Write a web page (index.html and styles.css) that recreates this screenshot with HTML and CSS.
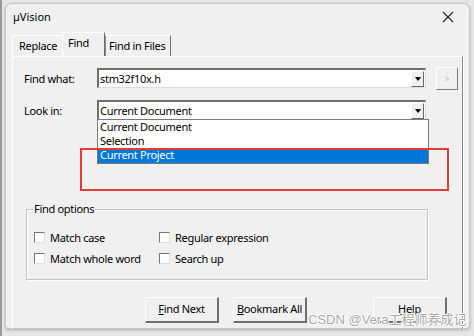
FILE: index.html
```html
<!DOCTYPE html>
<html lang="en">
<head>
    <meta charset="UTF-8">
    <meta name="viewport" content="width=device-width, initial-scale=1.0">
    <title>µVision Find</title>
    <link rel="stylesheet" href="styles.css">
</head>
<body>
    <div class="window">
        <div class="titlebar">
            <span class="title">µVision</span>
            <svg class="close" width="12" height="12" viewBox="0 0 12 12">
                <path d="M1 1 L11 11 M11 1 L1 11" stroke="#222" stroke-width="1.1" fill="none"/>
            </svg>
        </div>

        <ul class="tabs">
            <li class="tab replace">Replace</li>
            <li class="tab active">Find</li>
            <li class="tab files">Find in Files</li>
        </ul>

        <div class="panel">
            <div class="row">
                <label class="label">Find what:</label>
                <div class="combo">
                    <span class="combo-text">stm32f10x.h</span>
                    <span class="drop"><i></i></span>
                </div>
                <button class="more">&gt;</button>
            </div>

            <div class="row look">
                <label class="label">Look in:</label>
                <div class="combo">
                    <span class="combo-text">Current Document</span>
                    <span class="drop"><i></i></span>
                    <ul class="droplist">
                        <li>Current Document</li>
                        <li>Selection</li>
                        <li class="selected">Current Project</li>
                    </ul>
                </div>
            </div>

            <fieldset class="options">
                <legend>Find options</legend>
                <div class="checks">
                    <span class="check"><i></i>Match case</span>
                    <span class="check"><i></i>Regular expression</span>
                    <span class="check"><i></i>Match whole word</span>
                    <span class="check"><i></i>Search up</span>
                </div>
            </fieldset>

            <div class="buttons">
                <button class="btn find-next"><u>F</u>ind Next</button>
                <button class="btn"><u>B</u>ookmark All</button>
                <button class="btn help"><u>H</u>elp</button>
            </div>

            <div class="highlight"></div>
        </div>
    </div>

    <div class="watermark">CSDN @Vera工程师养成记</div>
</body>
</html>
```

FILE: styles.css
```css
* {
    margin: 0;
    padding: 0;
    box-sizing: border-box;
}

body {
    width: 474px;
    height: 336px;
    overflow: hidden;
    background-color: #e6e6e4;
    border-left: 2px solid #9a9a9a;
    font-family: 'Noto Sans', 'Noto Sans CJK SC', sans-serif;
    font-size: 11px;
    letter-spacing: -0.3px;
    line-height: 16px;
    color: #000;
    position: relative;
}

.window {
    margin: 3px 0 0 3px;
    width: 465px;
    height: 326px;
    background-color: #f0f0f0;
    border: 1px solid #c8c8c8;
    border-radius: 7px 7px 4px 4px;
    box-shadow: 0 1px 3px rgba(0, 0, 0, 0.25);
    padding: 0 6px 0 6px;
}

.titlebar {
    height: 27px;
    display: flex;
    align-items: center;
    justify-content: space-between;
    padding: 0 9px 2px 1px;
}

.title {
    letter-spacing: 0;
}

.close {
    display: block;
    margin-top: 1px;
}

.tabs {
    list-style: none;
    display: flex;
    align-items: flex-end;
    height: 25px;
}

.tab {
    height: 21px;
    line-height: 20px;
    white-space: nowrap;
    border-top: 1px solid #ffffff;
    border-left: 1px solid #ffffff;
    border-right: 1px solid #a0a0a0;
}

.tab.replace {
    width: 50px;
    padding-left: 6px;
    border-right: none;
}

.tab.active {
    height: 24px;
    width: 43px;
    padding-left: 5px;
    border-right: 1px solid #6e6e6e;
}

.tab.files {
    width: 66px;
    padding-left: 3px;
    border-left: 1px solid #8a8a8a;
    border-right: 1px solid #6e6e6e;
}

.panel {
    position: relative;
    width: 451px;
    height: 273px;
    border-left: 1px solid #ffffff;
    border-top: 1px solid #ffffff;
    border-right: 1px solid #8a8a8a;
    box-shadow: 1px 0 0 #ffffff;
    padding: 10px 0 0 11px;
}

.row {
    display: flex;
    align-items: center;
    height: 22px;
}

.row.look {
    margin-top: 10px;
}

.label {
    width: 73px;
    padding-top: 2px;
}

.combo {
    position: relative;
    width: 329px;
    height: 20px;
    background-color: #ffffff;
    border-top: 2px solid #6f6f6f;
    border-left: 2px solid #6f6f6f;
    border-right: 1px solid #dcdcdc;
    border-bottom: 1px solid #dcdcdc;
    display: flex;
    align-items: center;
    justify-content: space-between;
}

.combo-text {
    padding-left: 1px;
    line-height: 16px;
}

.drop {
    width: 13px;
    height: 16px;
    margin-right: 1px;
    background-color: #f0f0f0;
    border-top: 1px solid #ffffff;
    border-left: 1px solid #ffffff;
    border-right: 1px solid #6a6a6a;
    border-bottom: 1px solid #6a6a6a;
    display: flex;
    align-items: center;
    justify-content: center;
}

.drop i {
    width: 0;
    height: 0;
    border-left: 3px solid transparent;
    border-right: 3px solid transparent;
    border-top: 4px solid #000;
}

.more {
    margin-left: 10px;
    width: 22px;
    height: 23px;
    background-color: #f0f0f0;
    border-top: 1px solid #ffffff;
    border-left: 1px solid #ffffff;
    border-right: 1px solid #7a7a7a;
    border-bottom: 1px solid #7a7a7a;
    color: #b8b8b8;
    font-family: 'Noto Sans', sans-serif;
    font-size: 9px;
}

.droplist {
    position: absolute;
    top: 17px;
    left: -2px;
    width: 332px;
    list-style: none;
    background-color: #ffffff;
    border: 1px solid #7a7a7a;
    z-index: 2;
}

.droplist li {
    height: 14px;
    line-height: 14px;
    padding-left: 2px;
}

.droplist li.selected {
    background-color: #0078d7;
    color: #ffffff;
    height: 15px;
}

.highlight {
    position: absolute;
    left: 67px;
    top: 91px;
    width: 369px;
    height: 43px;
    border: 2px solid #e53a3a;
    z-index: 3;
}

.options {
    margin: 80px 0 0 2px;
    width: 402px;
    height: 79px;
    border: 1px solid #c4c4c4;
    box-shadow: inset 1px 1px 0 #ffffff, 1px 1px 0 #ffffff;
    padding: 0 0 0 7px;
}

.options legend {
    padding: 0 1px;
    margin-left: -1px;
}

.checks {
    display: grid;
    grid-template-columns: 125px auto;
    row-gap: 8px;
    margin-top: 14px;
}

.check {
    display: flex;
    align-items: center;
    height: 13px;
    white-space: nowrap;
}

.check i {
    width: 11px;
    height: 11px;
    margin-right: 5px;
    background-color: #ffffff;
    border-top: 1px solid #777;
    border-left: 1px solid #777;
    border-right: 1px solid #e0e0e0;
    border-bottom: 1px solid #e0e0e0;
}

.buttons {
    display: flex;
    margin-top: 17px;
    padding-left: 121px;
}

.btn {
    width: 74px;
    height: 26px;
    margin-right: 14px;
    white-space: nowrap;
    background-color: #f0f0f0;
    border-top: 1px solid #ffffff;
    border-left: 1px solid #ffffff;
    border-right: 2px solid #6f6f6f;
    border-bottom: 2px solid #6f6f6f;
    font-family: 'Noto Sans', sans-serif;
    font-size: 11px;
    letter-spacing: -0.3px;
    color: #000;
    padding-bottom: 3px;
}

.btn.help {
    margin-left: 52px;
}

.watermark {
    position: absolute;
    left: 306px;
    top: 312px;
    font-family: 'Liberation Sans', 'Noto Sans CJK SC', sans-serif;
    font-size: 13px;
    letter-spacing: 0;
    color: #a8a8a8;
    text-shadow: 1px 0 0 #fff, -1px 0 0 #fff, 0 1px 0 #fff, 0 -1px 0 #fff;
    white-space: nowrap;
}
```
